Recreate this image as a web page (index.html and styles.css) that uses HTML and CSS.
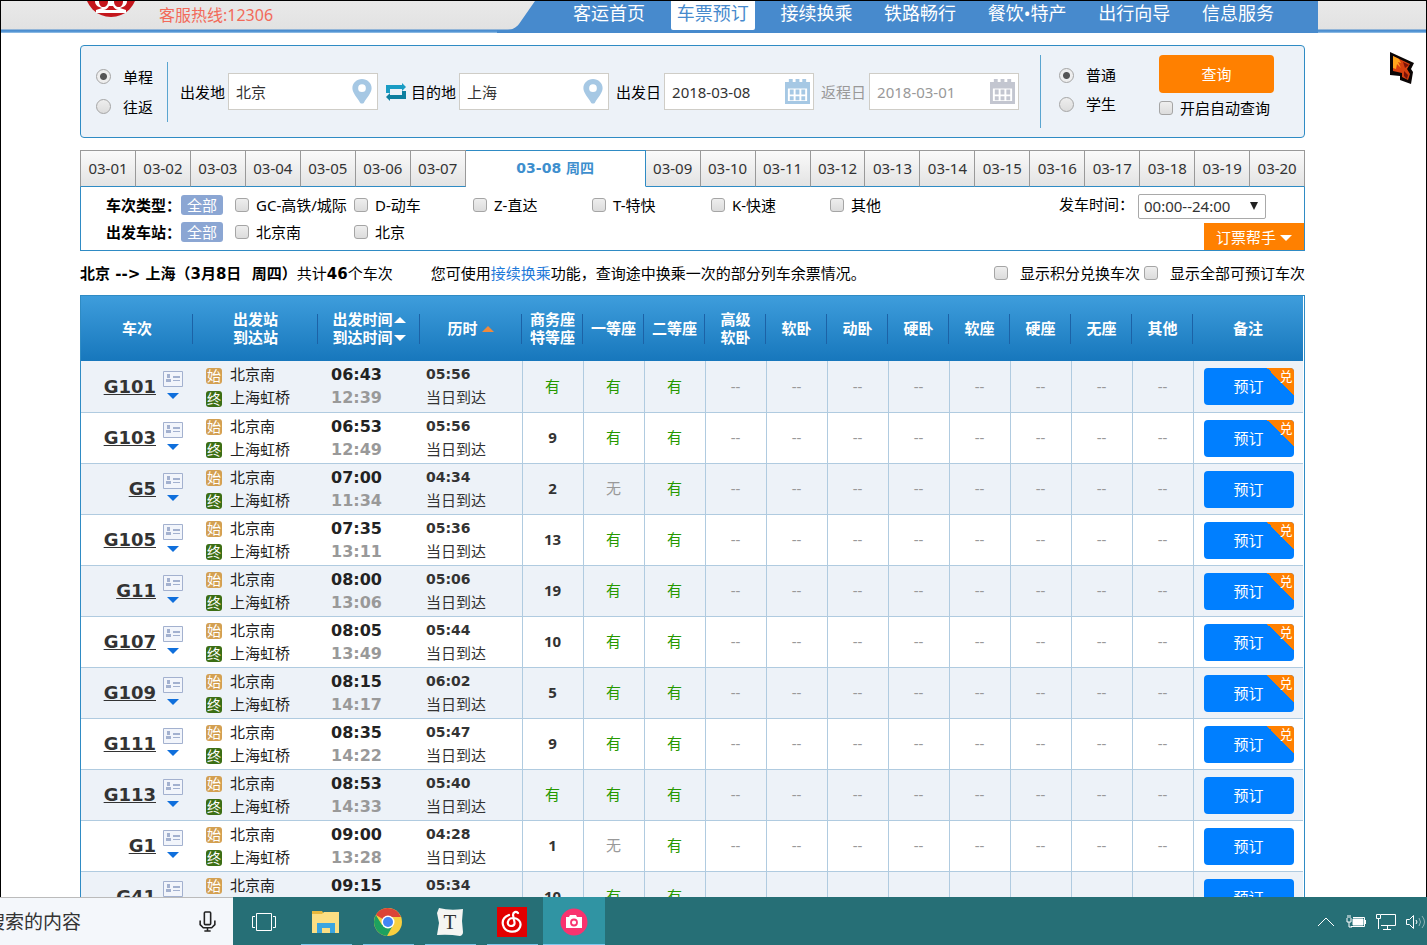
FILE: index.html
```html
<!DOCTYPE html>
<html lang="zh-CN">
<head>
    <meta charset="UTF-8">
    <meta name="viewport" content="width=device-width, initial-scale=1.0">
    <title>车票预订</title>
    <link rel="stylesheet" href="styles.css">
</head>
<body>
    <!-- 图标 -->
    <svg class="sprite" aria-hidden="true">
        <symbol id="icon-pin" viewBox="0 0 20 26">
            <path fill="currentColor" fill-rule="evenodd" d="M10 0C4.500 0 0 4.200 0 9.600c0 5 5.200 9.800 8 15 .8 1.200 3.200 1.200 4 0 2.800-5.200 8-10 8-15C20 4.200 15.500 0 10 0zm0 5.500a4 4 0 1 1 0 8 4 4 0 0 1 0-8z"/>
        </symbol>
        <symbol id="icon-calendar" viewBox="0 0 26 26">
            <path fill="currentColor" fill-rule="evenodd" d="M0 3h4V0h4v3h3V0h4v3h3V0h4v3h4v23H0zM3 10h20v13H3z"/>
            <path fill="currentColor" d="M5 11h4v5H5zM11 11h4v5h-4zM17 11h4v5h-4zM5 18h4v4H5zM11 18h4v4h-4zM17 18h4v4h-4z"/>
        </symbol>
        <symbol id="icon-card" viewBox="0 0 20 16">
            <path fill="#f2f5fb" stroke="#a3b1cf" d="M0.500 0.500h19v15H0.500z"/>
            <path fill="#a3b1cf" d="M4 3h3v4H4zM3 8h5v3H3zM10 5h7v2h-7zM10 9h7v1h-7z"/>
        </symbol>
        <symbol id="icon-down" viewBox="0 0 12 6">
            <path fill="currentColor" d="M0 0h12L6 6z"/>
        </symbol>
        <symbol id="icon-up" viewBox="0 0 12 6">
            <path fill="currentColor" d="M0 6h12L6 0z"/>
        </symbol>
    </svg>

    <div class="screen">
        <header class="header">
            <div class="brand">
                <svg class="logo" viewBox="0 0 52 17">
                    <circle cx="26" cy="-10" r="26" fill="#c4161c"/>
                    <path fill="#fff" d="M10 0h32c0 4-3 6-7 7l6 2v3H11V9l6-2c-4-1-7-3-7-7z"/>
                    <path fill="#c4161c" d="M14 0h9c0 4-2 6-5 6-2 0-4-2-4-6zM29 0h9c0 4-2 6-4 6-3 0-5-2-5-6zM18 9c3 0 5-2 6-4h4c1 2 3 4 6 4z"/>
                </svg>
                <span class="hotline">客服热线:12306</span>
            </div>
            <svg class="slope" viewBox="0 0 40 32" preserveAspectRatio="none">
                <path fill="#478acd" d="M40 0v32H0v-3h8c6 0 10-1 14-6L38 0z"/>
            </svg>
            <nav class="nav">
                <a href="#">客运首页</a>
                <a href="#" class="current">车票预订</a>
                <a href="#">接续换乘</a>
                <a href="#">铁路畅行</a>
                <a href="#">餐饮•特产</a>
                <a href="#">出行向导</a>
                <a href="#">信息服务</a>
            </nav>
        </header>

        <main class="container">
            <!-- 查询条件 -->
            <form class="search">
                <div class="radios trip">
                    <label><input type="radio" name="trip" checked>单程</label>
                    <label><input type="radio" name="trip">往返</label>
                </div>
                <div class="fields">
                    <label for="from">出发地</label>
                    <div class="field">
                        <input type="text" id="from" value="北京">
                        <svg class="pin"><use href="#icon-pin"/></svg>
                    </div>
                    <button type="button" class="swap" aria-label="交换">
                        <svg viewBox="0 0 20 18">
                            <path fill="#1a9cc4" d="M0 2h16V0l4 4-4 4V6H4v4H0z"/>
                            <path fill="#0e7f9f" d="M20 16H4v2l-4-4 4-4v2h12V8h4z"/>
                        </svg>
                    </button>
                    <label for="to">目的地</label>
                    <div class="field">
                        <input type="text" id="to" value="上海">
                        <svg class="pin"><use href="#icon-pin"/></svg>
                    </div>
                    <label for="goDate" class="date-label">出发日</label>
                    <div class="field">
                        <input type="text" id="goDate" value="2018-03-08">
                        <svg class="calendar"><use href="#icon-calendar"/></svg>
                    </div>
                    <label for="backDate" class="date-label off">返程日</label>
                    <div class="field off">
                        <input type="text" id="backDate" value="2018-03-01" disabled>
                        <svg class="calendar"><use href="#icon-calendar"/></svg>
                    </div>
                </div>
                <div class="radios passenger">
                    <label><input type="radio" name="passenger" checked>普通</label>
                    <label><input type="radio" name="passenger">学生</label>
                </div>
                <div class="submit">
                    <button type="button" class="btn-query">查询</button>
                    <label><input type="checkbox">开启自动查询</label>
                </div>
            </form>

            <!-- 日期 -->
            <div class="dates">
                <button>03-01</button>
                <button>03-02</button>
                <button>03-03</button>
                <button>03-04</button>
                <button>03-05</button>
                <button>03-06</button>
                <button>03-07</button>
                <button class="current">03-08 周四</button>
                <button>03-09</button>
                <button>03-10</button>
                <button>03-11</button>
                <button>03-12</button>
                <button>03-13</button>
                <button>03-14</button>
                <button>03-15</button>
                <button>03-16</button>
                <button>03-17</button>
                <button>03-18</button>
                <button>03-19</button>
                <button>03-20</button>
            </div>

            <!-- 筛选 -->
            <div class="filters">
                <div class="filter-rows">
                    <div class="filter-row">
                        <strong>车次类型：</strong>
                        <button class="all">全部</button>
                        <div class="options">
                            <label><input type="checkbox">GC-高铁/城际</label>
                            <label><input type="checkbox">D-动车</label>
                            <label><input type="checkbox">Z-直达</label>
                            <label><input type="checkbox">T-特快</label>
                            <label><input type="checkbox">K-快速</label>
                            <label><input type="checkbox">其他</label>
                        </div>
                    </div>
                    <div class="filter-row">
                        <strong>出发车站：</strong>
                        <button class="all">全部</button>
                        <div class="options">
                            <label><input type="checkbox">北京南</label>
                            <label><input type="checkbox">北京</label>
                        </div>
                    </div>
                </div>
                <div class="filter-side">
                    <div class="depart">
                        <label for="departTime">发车时间：</label>
                        <div class="select">
                            <select id="departTime">
                                <option>00:00--24:00</option>
                            </select>
                            <svg viewBox="0 0 8 8"><path fill="#222" d="M0 0h8L4 8z"/></svg>
                        </div>
                    </div>
                    <button class="helper">订票帮手 <svg><use href="#icon-down"/></svg></button>
                </div>
            </div>

            <div class="summary">
                <p><strong>北京 --&gt; 上海（3月8日&nbsp; 周四）</strong>共计<strong>46</strong>个车次</p>
                <p class="hint">您可使用<a href="#">接续换乘</a>功能，查询途中换乘一次的部分列车余票情况。</p>
                <div class="shows">
                    <label><input type="checkbox">显示积分兑换车次</label>
                    <label><input type="checkbox">显示全部可预订车次</label>
                </div>
            </div>

            <!-- 车次列表 -->
            <div class="table-box">
                <table>
                    <colgroup>
                        <col class="col-train">
                        <col class="col-station">
                        <col class="col-time">
                        <col class="col-span">
                        <col span="11">
                        <col class="col-note">
                    </colgroup>
                    <thead>
                        <tr>
                            <th>车次</th>
                            <th>出发站<br>到达站</th>
                            <th>出发时间<svg><use href="#icon-up"/></svg><br>到达时间<svg><use href="#icon-down"/></svg></th>
                            <th>历时 <svg class="sorted"><use href="#icon-up"/></svg></th>
                            <th>商务座<br>特等座</th>
                            <th>一等座</th>
                            <th>二等座</th>
                            <th>高级<br>软卧</th>
                            <th>软卧</th>
                            <th>动卧</th>
                            <th>硬卧</th>
                            <th>软座</th>
                            <th>硬座</th>
                            <th>无座</th>
                            <th>其他</th>
                            <th>备注</th>
                        </tr>
                    </thead>
                    <tbody id="trains"></tbody>
                </table>
            </div>
        </main>

        <svg class="cursor" viewBox="0 0 24 32">
            <path fill="#0a0505" d="M0 0l24 11-3 6 2 3-2 12-11-4v-4l-10-1z"/>
            <path fill="#d8400f" d="M3 4l17 8-3 5 3 5-2 6-6-3v-4l-9-2z"/>
            <path fill="#ffa51c" d="M3 4l6 3 2 4-3-1 3 6-4-4-1 5-3-1z"/>
            <path fill="#7c1208" d="M13 10l6 3-4 3zM14 19l4 4-1 4-3-3z"/>
        </svg>
    </div>

    <!-- 任务栏 -->
    <footer class="taskbar">
        <div class="task-search">
            <input type="text" value="搜索的内容" aria-label="搜索">
            <svg class="mic" viewBox="0 0 16 20" fill="none" stroke="#222" stroke-width="1.500">
                <rect x="5" y="1" width="6" height="12" rx="1"/>
                <path d="M1 9v4l3 3h8l3-3V9M8 16v3M5 19h6"/>
            </svg>
        </div>
        <button class="app plain" aria-label="任务视图">
            <svg viewBox="0 0 26 20" fill="none" stroke="#fff">
                <path d="M5.500 1.500h15v17h-15zM4 4.500H1.500v11H4M22 4.500h2.500v11H22"/>
            </svg>
        </button>
        <button class="app" aria-label="文件资源管理器">
            <svg viewBox="0 0 28 26">
                <path fill="#e8b93c" d="M0 2h10l2 3h14v6H0z"/>
                <path fill="#fbdf83" d="M0 5h10l2-2h15v21H0z"/>
                <path fill="#3aa5e0" d="M5 14h18v10h-5v-5h-8v5H5z"/>
            </svg>
        </button>
        <button class="app" aria-label="浏览器">
            <svg viewBox="0 0 28 28">
                <circle cx="14" cy="14" r="14" fill="#f8cf3f"/>
                <path fill="#db4437" d="M14 14L1.900 7A14 14 0 0 1 27 9H14z"/>
                <path fill="#1da15f" d="M1.900 7A14 14 0 0 0 13 28l5.500-10L14 14 8 17z"/>
                <circle cx="14" cy="14" r="6.500" fill="#fff"/>
                <circle cx="14" cy="14" r="5" fill="#4285f4"/>
            </svg>
        </button>
        <button class="app" aria-label="文本编辑器">
            <svg viewBox="0 0 28 28">
                <path fill="#f5f5f3" d="M3 0q11 3 24 1l-1 12 1 11q0 3-3 4-11-2-23-1l2-12-2-10z"/>
                <text x="14" y="21" text-anchor="middle" class="app-letter">T</text>
            </svg>
        </button>
        <button class="app" aria-label="音乐">
            <svg class="music" viewBox="0 0 30 30">
                <path fill="#e20000" d="M0 0h30v30H0z"/>
                <path fill="none" stroke="#fff" stroke-width="2.200" stroke-linecap="round" d="M12 8c-5 2-7 6-6 10 2 8 14 9 17 2 2-5-2-9-7-9-6 0-7 8-2 8 4 0 4-3 3-6l-1-5c0-3 3-4 5-2"/>
            </svg>
        </button>
        <button class="app active" aria-label="录屏">
            <svg viewBox="0 0 28 28">
                <circle cx="14" cy="14" r="13.500" fill="#f9336f"/>
                <path fill="#fff" d="M6 9h3l1-2h6l1 2h5v11H6z"/>
                <circle cx="14" cy="14.500" r="3" fill="none" stroke="#f9336f" stroke-width="1.800"/>
            </svg>
        </button>
        <div class="tray">
            <svg viewBox="0 0 20 18" fill="none" stroke="#fff"><path d="M2 13l8-8 8 8"/></svg>
            <svg viewBox="0 0 20 18" fill="none" stroke="#fff">
                <path d="M1 5v4h4V5M2 5V2M4 5V2M3 9v5h3M7 4.500h11.500v9H5M19.500 7v4"/>
                <path fill="#fff" d="M7 6h10v6H7z"/>
            </svg>
            <svg viewBox="0 0 20 18" fill="none" stroke="#fff"><path d="M5 1.500h14.500v11H5M11.500 13v3M7 16.500h8M0.500 1.500h4v4h-4zM2.500 6v10"/></svg>
            <svg viewBox="0 0 20 18" fill="none" stroke="#fff">
                <path d="M0.500 6.500h3l4-4v13l-4-4h-3zM10 7q2 2 0 4"/>
                <path stroke="#8fb3b7" d="M13 5q3 4 0 8M16 3q5 6 0 12"/>
            </svg>
        </div>
    </footer>

    <script>
        const trains = [
            { no: "G101", start: "06:43", end: "12:39", span: "05:56", seats: ["有", "有", "有"], points: true },
            { no: "G103", start: "06:53", end: "12:49", span: "05:56", seats: ["9", "有", "有"], points: true },
            { no: "G5", start: "07:00", end: "11:34", span: "04:34", seats: ["2", "无", "有"], points: false },
            { no: "G105", start: "07:35", end: "13:11", span: "05:36", seats: ["13", "有", "有"], points: true },
            { no: "G11", start: "08:00", end: "13:06", span: "05:06", seats: ["19", "有", "有"], points: true },
            { no: "G107", start: "08:05", end: "13:49", span: "05:44", seats: ["10", "有", "有"], points: true },
            { no: "G109", start: "08:15", end: "14:17", span: "06:02", seats: ["5", "有", "有"], points: true },
            { no: "G111", start: "08:35", end: "14:22", span: "05:47", seats: ["9", "有", "有"], points: true },
            { no: "G113", start: "08:53", end: "14:33", span: "05:40", seats: ["有", "有", "有"], points: false },
            { no: "G1", start: "09:00", end: "13:28", span: "04:28", seats: ["1", "无", "有"], points: false },
            { no: "G41", start: "09:15", end: "14:49", span: "05:34", seats: ["10", "有", "有"], points: false }
        ];

        function seatCell(value) {
            const kind = value === "有" ? "yes" : value === "无" || value === "--" ? "none" : "count";
            return `<td class="seat ${kind}">${value}</td>`;
        }

        const tableBody = document.getElementById("trains");

        trains.forEach(train => {
            // 后八种席别都没有票
            const seats = train.seats.concat(Array(8).fill("--"));
            const row = document.createElement("tr");
            row.innerHTML = `
                <td>
                    <div class="train">
                        <a href="#">${train.no}</a>
                        <span class="train-icons">
                            <svg class="card"><use href="#icon-card"/></svg>
                            <svg class="more"><use href="#icon-down"/></svg>
                        </span>
                    </div>
                </td>
                <td class="station">
                    <div><span class="tag">始</span>北京南</div>
                    <div><span class="tag last">终</span>上海虹桥</div>
                </td>
                <td class="time"><div>${train.start}</div><div class="arrive">${train.end}</div></td>
                <td class="span"><div class="duration">${train.span}</div><div>当日到达</div></td>
                ${seats.map(seatCell).join("")}
                <td class="note"><button class="book">预订${train.points ? '<span class="points">兑</span>' : ""}</button></td>
            `;
            tableBody.appendChild(row);
        });
    </script>
</body>
</html>
```
FILE: styles.css
```css
* {
    box-sizing: border-box;
}

body {
    display: flex;
    flex-direction: column;
    height: 100vh;
    margin: 0;
    overflow: hidden;
    font-family: "Noto Sans", "Noto Sans CJK SC", sans-serif;
    font-size: 15px;
    line-height: 20px;
    color: #000;
    background-color: #fff;
}

button,
input,
select {
    margin: 0;
    padding: 0;
    border: none;
    font: inherit;
    color: inherit;
}

button {
    cursor: pointer;
}

.sprite {
    display: none;
}

.screen {
    position: relative;
    flex: 1;
    min-height: 0;
    overflow: hidden;
    border: 1px solid #000;
    border-bottom: none;
}

/* 页头 */
.header {
    display: flex;
    height: 32px;
    padding-right: 108px;
    background: linear-gradient(#e9e9e9, #e2e2e2 28px, #478acd 29px, #5b9ad6 31px, #b5d4ef);
}

.brand {
    display: flex;
    align-items: flex-start;
    gap: 22px;
    width: 496px;
    padding-left: 84px;
}

.logo {
    width: 52px;
    height: 17px;
}

.hotline {
    margin-top: 4px;
    font-size: 16px;
    color: #f26a5a;
}

.slope {
    width: 40px;
    height: 32px;
}

.nav {
    flex: 1;
    display: flex;
    justify-content: space-between;
    align-items: flex-start;
    padding: 0 38px 0 30px;
    background-color: #478acd;
}

.nav a {
    height: 29px;
    padding: 0 6px;
    font-size: 18px;
    line-height: 24px;
    color: #fff;
    text-decoration: none;
    white-space: nowrap;
}

.nav a.current {
    color: #478acd;
    background-color: #fff;
    border-radius: 0 0 2px 2px;
}

.container {
    padding: 12px 121px 0 79px;
}

/* 单选和多选 */
input[type="radio"],
input[type="checkbox"] {
    appearance: none;
    flex: none;
    width: 14px;
    height: 14px;
    border: 1px solid #a5a5a5;
    border-radius: 3px;
    background: linear-gradient(#eee, #dcdcdc);
}

input[type="radio"] {
    width: 15px;
    height: 15px;
    border-radius: 50%;
}

input[type="radio"]:checked {
    background: radial-gradient(#555 3px, #eee 4px);
}

label {
    display: flex;
    align-items: center;
    white-space: nowrap;
}

/* 查询条件 */
.search {
    display: flex;
    align-items: center;
    height: 93px;
    padding-left: 15px;
    border: 1px solid #2f8bc4;
    border-radius: 4px;
    background-color: #edf2f8;
}

.radios {
    display: flex;
    flex-direction: column;
    gap: 10px;
}

.radios label {
    gap: 12px;
}

.trip {
    width: 72px;
    padding: 5px 0;
    border-right: 1px solid #5aa5d0;
}

.fields {
    display: flex;
    align-items: center;
    gap: 3px;
    margin: 0 21px 0 12px;
}

.field {
    position: relative;
    width: 150px;
    height: 37px;
    color: #a6c8e4;
}

.field input {
    width: 100%;
    height: 100%;
    padding: 0 40px 0 7px;
    border: 1px solid #cfcdc7;
    background-color: #fff;
    color: #333;
}

.field.off {
    color: #c3c6d0;
}

.field.off input,
.off {
    color: #999;
}

.field svg {
    position: absolute;
    top: 6px;
}

.pin {
    right: 6px;
    width: 20px;
    height: 25px;
}

.calendar {
    right: 4px;
    width: 25px;
    height: 25px;
}

.swap {
    display: flex;
    margin: 0 2px 0 5px;
    background: none;
}

.swap svg {
    width: 20px;
    height: 18px;
}

.date-label {
    margin-left: 4px;
}

.passenger {
    gap: 9px;
    width: 119px;
    padding: 10px 0 14px 18px;
    border-left: 1px solid #5aa5d0;
}

.submit {
    display: flex;
    flex-direction: column;
    gap: 5px;
    padding-bottom: 10px;
}

.submit label {
    gap: 7px;
}

.btn-query {
    width: 115px;
    height: 38px;
    border-radius: 4px;
    color: #fff;
    background-color: #ff8000;
}

/* 日期 */
.dates {
    display: flex;
    height: 37px;
    margin-top: 12px;
}

.dates button {
    flex: 1;
    padding-bottom: 2px;
    border: 1px solid #999;
    border-left: none;
    border-bottom-color: #2f8bc4;
    color: #333;
    background: linear-gradient(#fafafa, #e3e3e3);
}

.dates button:first-child {
    border-left: 1px solid #999;
}

.dates .current {
    flex: 0 0 180px;
    border-color: #2f8bc4;
    border-bottom-color: #fff;
    font-family: "DejaVu Sans", "Noto Sans CJK SC", sans-serif;
    font-size: 14px;
    font-weight: bold;
    color: #3e8fce;
    background: #fff;
}

/* 筛选 */
.filters {
    display: flex;
    justify-content: space-between;
    height: 64px;
    border: 1px solid #2f8bc4;
    border-top: none;
}

.filter-rows {
    display: flex;
    flex-direction: column;
    gap: 7px;
    padding: 8px 0 0 25px;
}

.filter-row {
    display: flex;
    align-items: center;
}

.filter-row strong {
    width: 75px;
    white-space: nowrap;
}

.all {
    width: 42px;
    height: 20px;
    margin-right: 12px;
    border-radius: 3px;
    line-height: 20px;
    color: #fff;
    background-color: #8ba6d3;
}

.options {
    display: grid;
    grid-template-columns: repeat(6, 119px);
}

.options label {
    gap: 7px;
}

.filter-side {
    display: flex;
    flex-direction: column;
    align-items: flex-end;
    justify-content: space-between;
    padding-top: 7px;
}

.depart {
    display: flex;
    align-items: flex-start;
    gap: 4px;
    padding-right: 38px;
}

.select {
    position: relative;
    width: 128px;
}

.select select {
    appearance: none;
    display: block;
    width: 100%;
    height: 25px;
    padding: 0 0 2px 5px;
    border: 1px solid #a9a9a9;
    border-radius: 2px;
    background-color: #fff;
    color: #333;
}

.select svg {
    position: absolute;
    top: 8px;
    right: 8px;
    width: 8px;
    height: 8px;
}

.helper {
    width: 100px;
    height: 27px;
    color: #fff;
    background-color: #ff8000;
}

.helper svg {
    width: 12px;
    height: 6px;
    vertical-align: middle;
}

/* 车次统计 */
.summary {
    display: flex;
    align-items: center;
    height: 44px;
    white-space: nowrap;
}

.summary p {
    margin: 0;
}

.summary strong {
    font-family: "DejaVu Sans", "Noto Sans CJK SC", sans-serif;
}

.hint {
    padding-left: 38px;
}

.hint a {
    color: #1f7ad9;
    text-decoration: none;
}

.shows {
    display: flex;
    gap: 4px;
    margin-left: auto;
}

.shows label {
    gap: 12px;
}

/* 车次列表 */
.table-box {
    padding-right: 1px;
    border: 1px solid #2f8bc4;
}

table {
    width: 100%;
    table-layout: fixed;
    border-collapse: collapse;
}

.col-train {
    width: 112px;
}

.col-station {
    width: 125px;
}

.col-time {
    width: 102px;
}

.col-span {
    width: 102px;
}

.col-note {
    width: 110px;
}

thead {
    background: linear-gradient(#3e9ddc, #1777bc);
}

th {
    height: 65px;
    padding: 0 0 2px;
    line-height: 18px;
    color: #fff;
    background: linear-gradient(#1c62a6, #1c62a6) no-repeat right center / 1px 30px;
}

th:last-child {
    background: none;
}

th svg {
    width: 12px;
    height: 6px;
    margin-left: 1px;
    vertical-align: middle;
}

th .sorted {
    color: #f08a3c;
}

td {
    height: 51px;
    padding: 0;
    border-bottom: 1px solid #b0cbe0;
    line-height: 23px;
}

tbody tr:nth-child(odd) {
    background-color: #edf2f8;
}

.train {
    display: flex;
    justify-content: flex-end;
    align-items: center;
    gap: 7px;
    padding-right: 10px;
}

.train a {
    font-family: "DejaVu Sans", sans-serif;
    font-size: 18px;
    font-weight: bold;
    color: #333;
}

.train-icons {
    display: flex;
    flex-direction: column;
    gap: 6px;
    padding-bottom: 3px;
}

.card {
    width: 20px;
    height: 16px;
}

.more {
    align-self: center;
    width: 12px;
    height: 6px;
    color: #0f6fdc;
}

.station {
    padding-left: 13px;
    color: #222;
}

.tag {
    display: inline-block;
    width: 16px;
    height: 16px;
    margin-right: 8px;
    border-radius: 3px;
    font-size: 14px;
    line-height: 16px;
    text-align: center;
    vertical-align: middle;
    color: #fff;
    background-color: #d3a052;
}

.tag.last {
    background-color: #3c6e14;
}

.time {
    padding-left: 13px;
    font-family: "DejaVu Sans", sans-serif;
    font-size: 16px;
    font-weight: bold;
    color: #222;
}

.arrive {
    color: #999;
}

.span {
    padding-left: 6px;
    color: #333;
}

.duration {
    font-family: "DejaVu Sans", sans-serif;
    font-size: 14px;
    font-weight: bold;
}

.seat {
    border-left: 1px solid #b0cbe0;
    text-align: center;
}

.yes {
    color: #269900;
}

.none {
    color: #999;
}

.count {
    font-weight: bold;
    color: #333;
}

.note {
    padding: 1px 0 0 10px;
    border-left: 1px solid #b0cbe0;
}

.book {
    position: relative;
    display: block;
    width: 90px;
    height: 37px;
    border-radius: 4px;
    overflow: hidden;
    color: #fff;
    background-color: #007fff;
}

.points {
    position: absolute;
    top: 0;
    right: 0;
    width: 27px;
    height: 27px;
    padding-right: 1px;
    font-size: 13px;
    line-height: 16px;
    text-align: right;
    background: linear-gradient(45deg, transparent 50%, #ff8000 50%);
}

.cursor {
    position: absolute;
    top: 51px;
    right: 12px;
    width: 24px;
    height: 32px;
}

/* 任务栏 */
.taskbar {
    display: flex;
    height: 48px;
    background-color: #266f76;
}

.task-search {
    display: flex;
    align-items: center;
    width: 233px;
    padding-right: 17px;
    overflow: hidden;
    border-top: 1px solid #bbb;
    background-color: #f4f7fb;
}

.task-search input {
    flex: 1;
    min-width: 0;
    margin-left: -14px;
    font-size: 19px;
    line-height: 28px;
    color: #333;
    background: none;
}

.mic {
    width: 17px;
    height: 21px;
}

.app {
    position: relative;
    display: flex;
    align-items: center;
    justify-content: center;
    width: 62px;
    padding-top: 1px;
    background: none;
}

.app svg {
    width: 28px;
    height: 28px;
}

.app.plain svg {
    width: 26px;
    height: 20px;
}

.app .music {
    width: 30px;
    height: 30px;
}

.app::after {
    content: "";
    position: absolute;
    bottom: 0;
    left: 6px;
    right: 5px;
    height: 1px;
    background-color: #7cc8ec;
}

.app.plain::after {
    display: none;
}

.app.active {
    background-color: #3094a3;
}

.app.active::after {
    left: 0;
    right: 0;
}

.app-letter {
    font-family: "Liberation Serif", serif;
    font-size: 21px;
    fill: #333;
}

.tray {
    display: flex;
    align-items: center;
    gap: 10px;
    margin-left: auto;
    padding: 2px 1px 0 0;
}

.tray svg {
    width: 20px;
    height: 18px;
}
```
